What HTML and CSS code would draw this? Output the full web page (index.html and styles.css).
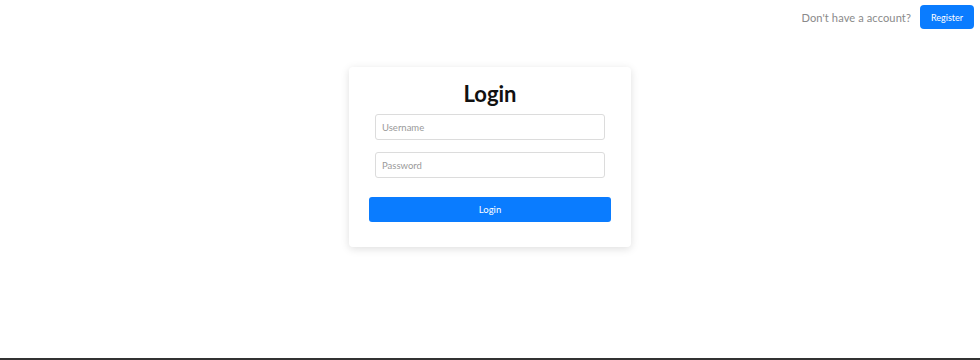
FILE: index.html
```html
<!DOCTYPE html>
<html>
<head>
<meta charset="utf-8">
<link rel="stylesheet" href="styles.css">
</head>
<body>
<div class="page">
  <header class="topbar">
    <span class="topbar-text">Don't have a account?</span>
    <button class="btn-register">Register</button>
  </header>
  <main class="main">
    <form class="card">
      <h1 class="card-title">Login</h1>
      <input class="field" type="text" placeholder="Username">
      <input class="field field-second" type="password" placeholder="Password">
      <button class="btn-login" type="button">Login</button>
    </form>
  </main>
</div>
</body>
</html>
```

FILE: styles.css
```css
html, body {
  margin: 0;
  padding: 0;
  background: #fff;
}
body {
  font-family: "Lato", "Noto Sans", "Liberation Sans", sans-serif;
  color: #111;
}
.page {
  height: 360px;
  box-sizing: border-box;
  border-bottom: 2px solid #333;
  display: flex;
  flex-direction: column;
}
.topbar {
  display: flex;
  justify-content: flex-end;
  align-items: center;
  padding: 5px 6px 0 0;
  gap: 9px;
}
.topbar-text {
  font-size: 11.1px;
  color: #8a8a8a;
  letter-spacing: 0.1px;
}
.btn-register {
  width: 54px;
  height: 24px;
  border: none;
  border-radius: 4px;
  background: #0a7cff;
  color: #fff;
  font-family: inherit;
  font-size: 9px;
  padding: 0;
}
.main {
  display: flex;
  justify-content: center;
  padding-top: 38px;
}
.card {
  width: 282px;
  box-sizing: border-box;
  padding: 12px 20px 25px 20px;
  background: #fff;
  border-radius: 4px;
  box-shadow: 0 2px 8px rgba(0, 0, 0, 0.13);
  display: flex;
  flex-direction: column;
}
.card-title {
  margin: 0;
  font-size: 22px;
  font-weight: 700;
  line-height: 30px;
  text-align: center;
  color: #111;
}
.field {
  margin: 5px 6px 0;
  height: 26px;
  box-sizing: border-box;
  border: 1px solid #dcdcdc;
  border-radius: 3px;
  padding: 0 6px;
  font-family: inherit;
  font-size: 9.5px;
  color: #333;
  outline: none;
}
.field::placeholder {
  color: #9a9a9a;
}
.field-second {
  margin-top: 12px;
}
.btn-login {
  margin-top: 19px;
  height: 25px;
  border: none;
  border-radius: 3px;
  background: #0a7cff;
  color: #fff;
  font-family: inherit;
  font-size: 9.5px;
  padding: 0;
}
```
